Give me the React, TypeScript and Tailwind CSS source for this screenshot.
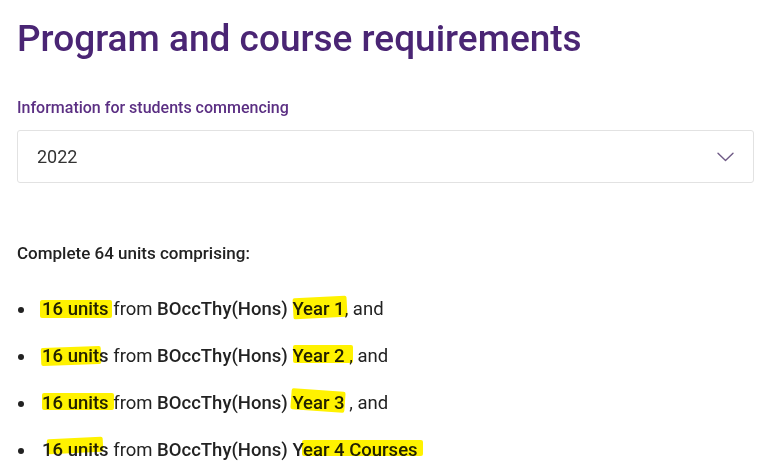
import React from "react";

type Mark = { l: number; t: number; w: number; h: number; r?: number };

const B = ({ children }: { children: React.ReactNode }) => (
  <span className="font-medium">{children}</span>
);

const rows: { parts: React.ReactNode; marks: Mark[] }[] = [
  {
    parts: (
      <>
        <B>16 units</B> from <B>BOccThy(Hons)</B> <B>Year 1</B>, and
      </>
    ),
    marks: [
      { l: 40, t: 300, w: 72, h: 18 },
      { l: 293, t: 297, w: 54, h: 21, r: -3 },
    ],
  },
  {
    parts: (
      <>
        <B>16 units</B> from <B>BOccThy(Hons)</B> <B>Year 2</B> , and
      </>
    ),
    marks: [
      { l: 41, t: 347, w: 60, h: 18, r: -2 },
      { l: 293, t: 345, w: 60, h: 18 },
    ],
  },
  {
    parts: (
      <>
        <B>16 units</B> from <B>BOccThy(Hons)</B> <B>Year 3</B> , and
      </>
    ),
    marks: [
      { l: 42, t: 393, w: 72, h: 17 },
      { l: 291, t: 390, w: 54, h: 21, r: 4 },
    ],
  },
  {
    parts: (
      <>
        <B>16 units</B> from <B>BOccThy(Hons)</B> <B>Year 4 Courses</B>
      </>
    ),
    marks: [
      { l: 47, t: 438, w: 56, h: 15, r: -3 },
      { l: 302, t: 440, w: 121, h: 16 },
    ],
  },
];

export default function App() {
  const marks = rows.flatMap((r) => r.marks);
  return (
    <div
      className="relative w-[768px] h-[473px] overflow-hidden bg-white px-[17px]"
      style={{ fontFamily: "Roboto, 'Noto Sans', sans-serif" }}
    >
      <h1 className="pt-[15px] text-[37px] leading-[48px] font-medium text-[#4a2574]">
        Program and course requirements
      </h1>
      <div className="mt-[35px] text-[16px] leading-[20px] font-medium text-[#5b2f83]">
        Information for students commencing
      </div>
      <div className="mt-[12px] h-[53px] w-[737px] rounded-[3px] border border-[#e2e2e2] flex items-center justify-between pl-[19px] pr-[19px]">
        <span className="text-[18px] text-[#333333]">2022</span>
        <svg width="17" height="10" viewBox="0 0 17 10" fill="none">
          <path d="M1 1.2 L8.5 8.5 L16 1.2" stroke="#6f5a86" strokeWidth="1.4" strokeLinecap="round" strokeLinejoin="round" />
        </svg>
      </div>
      <div className="mt-[59px] text-[17px] leading-[22px] font-medium text-[#222222]">
        Complete 64 units comprising:
      </div>
      <ul className="mt-[35px] flex flex-col gap-[25px]">
        {rows.map((r, i) => (
          <li key={i} className="flex items-center h-[22px] text-[18.5px] text-[#222222]">
            <span className="w-[25px] pl-[1px] flex items-center">
              <span className="block w-[6px] h-[6px] rounded-full bg-[#222222]" />
            </span>
            <span>{r.parts}</span>
          </li>
        ))}
      </ul>
      {marks.map((m, i) => (
        <div
          key={i}
          className="absolute bg-[#fff200] mix-blend-multiply rounded-[2px]"
          style={{ left: m.l, top: m.t, width: m.w, height: m.h, transform: m.r ? `rotate(${m.r}deg)` : undefined }}
        />
      ))}
    </div>
  );
}
